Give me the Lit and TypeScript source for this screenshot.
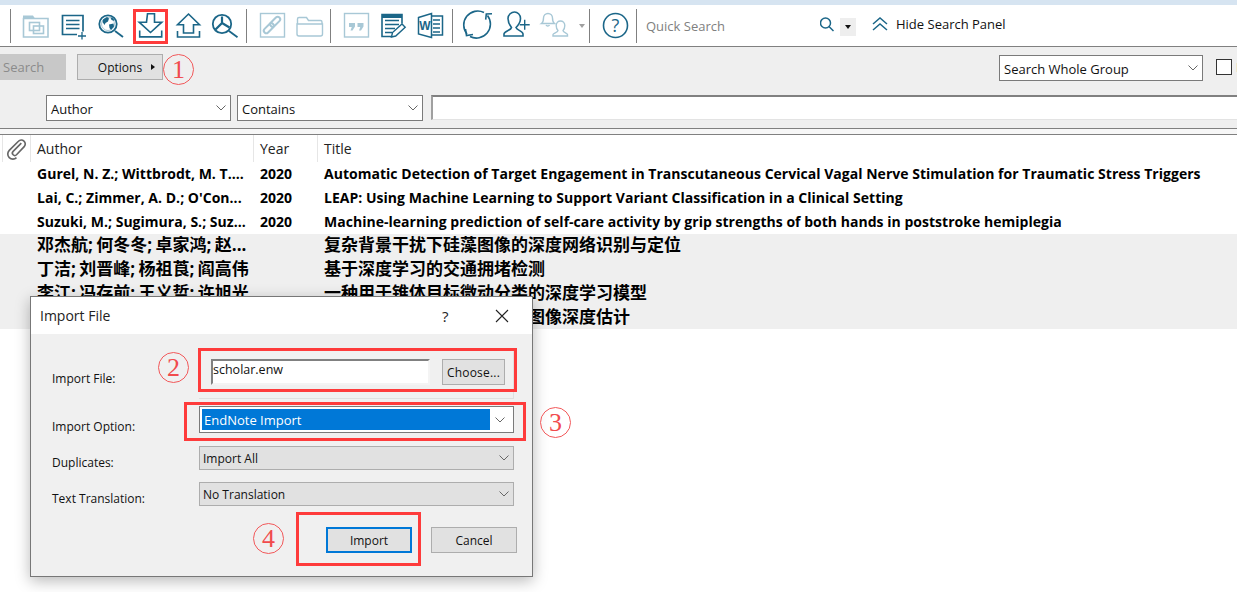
import { LitElement, html, css, svg } from "lit";
import { customElement } from "lit/decorators.js";

const D = "#1b6688";
const F = "#a8c8d6";

const group1 = [
  svg`<g fill="none" stroke="${F}" stroke-width="1.6"><path d="M23.500 18.500h24.500v18.500h-24.500z"/><rect x="29.500" y="22.500" width="10" height="8"/><rect x="33.500" y="26" width="10" height="7.500"/></g><path d="M23 15.500h10l2 3h-12z" fill="${F}"/>`,
  svg`<g fill="none" stroke="${D}" stroke-width="1.7"><path d="M77 34.500h-14.500v-19h20.500v16"/><path d="M66 20.500h13.500M66 24.500h13.500M66 28.500h13.500"/><path d="M82 32v7.500M78 36h8" stroke-width="1.300"/></g>`,
  svg`<circle cx="108" cy="24" r="8.700" fill="none" stroke="${D}" stroke-width="1.800"/><circle cx="108" cy="24" r="6.500" fill="none" stroke="${F}" stroke-width="1"/><path d="M103 19.500l4-2.500 2 1.500-1 3-2.500 1.500-1 2-2-3zM109 24.500l4.500-1 .5 3-3 3.500-1.500-2zM110.500 17l3 1.500 1 2.500-3-1z" fill="${D}"/><path d="M115 31l8 6" stroke="${D}" stroke-width="1.800" fill="none"/>`,
  svg`<g fill="none" stroke="${D}" stroke-width="1.600"><path d="M147.500 13.800h7v8.400h7.300l-11.300 10.300-11.300-10.300h7.300z"/><path d="M139.700 30.500v6.400h22v-6.400"/></g>`,
  svg`<g fill="none" stroke="${D}" stroke-width="1.600"><path d="M188.500 14l11 10.700h-6v8.300h-10v-8.300h-6z"/><path d="M177.500 31v6h22v-6"/></g>`,
  svg`<g fill="none" stroke="${D}" stroke-width="1.800"><circle cx="222" cy="24" r="9.200"/><path d="M229 31l8.500 6.300"/><path d="M222 16.500v6.500l-6.500 6.500M222 23l7.500 4.500" stroke-width="2.200"/></g>`,
];

const group2 = [
  svg`<rect x="260.500" y="13.500" width="24" height="23.500" fill="none" stroke="${F}" stroke-width="1.400"/><g transform="rotate(-45 272 25)" fill="none" stroke="${F}" stroke-width="2"><rect x="261.500" y="22.500" width="12" height="5" rx="2.500"/><rect x="270.500" y="22.500" width="12" height="5" rx="2.500"/></g>`,
  svg`<g fill="none" stroke="${F}" stroke-width="1.400"><path d="M297.500 24v-5a1.500 1.500 0 0 1 1.500-1.500h7.500l2 3h12a1.500 1.500 0 0 1 1.500 1.500v2"/><path d="M297 24h25.500v10a2 2 0 0 1-2 2h-21.500a2 2 0 0 1-2-2z"/></g>`,
];

const group3 = [
  svg`<rect x="344.500" y="13.500" width="24" height="23.500" fill="none" stroke="${F}" stroke-width="1.400"/><path d="M349 23h6v3.500l-2.500 4h-2l1.300-3.500h-2.800zM357.500 23h6v3.500l-2.500 4h-2l1.300-3.500h-2.800z" fill="${F}"/>`,
  svg`<g fill="none" stroke="${D}" stroke-width="1.600"><path d="M391 36.500h-9v-22h20v9"/><path d="M382 16.500h20" stroke-width="3"/><path d="M385 20.500h14M385 24.500h14M385 28.500h10M385 32.500h7"/><path d="M391.500 37l1-4.500 9.500-8.500 3.200 3.200-9.500 8.800z" stroke-width="1.400"/></g>`,
  svg`<g fill="none" stroke="${D}" stroke-width="1.500"><path d="M431 16h11.500v19h-11.500"/><path d="M433 20h7M433 24h7M433 28h7M433 32h7"/></g><path d="M418.500 17.500l13-4v24l-13-3.500z" fill="#fff" stroke="${D}" stroke-width="1.500"/><text x="425" y="30" text-anchor="middle" font-family="Liberation Sans" font-weight="700" font-size="12" fill="${D}">W</text>`,
];

const group4 = [
  svg`<g fill="none" stroke="${D}" stroke-width="1.600"><path d="M484 12.500A14 14 0 0 0 467 34"/><path d="M465.500 29l1 6.500 6.500-1"/><path d="M487.500 15.500A14 14 0 0 1 470 36.500"/><path d="M485.700 19.700l.6-5.700 5.700-.3"/></g>`,
  svg`<g fill="none" stroke="${D}" stroke-width="1.600"><path d="M504 36h19v-2c0-3-6-3.500-7-6.500 2-2 4.500-4.500 4.500-9 0-4-3-6.500-6-6.500-3 0-6.500 2.500-6.500 6.500 0 4.500 2 7 3.500 9-.5 3-7.500 3.500-7.500 6.500z"/><path d="M524.700 19.700v10M519.700 24.700h10" stroke-width="1.400"/></g>`,
  svg`<g fill="none" stroke="${F}" stroke-width="1.400"><path d="M541.500 23.500h13c-1.500-1-2-3-2-5.500 0-2.500-2-4.500-4.500-4.500s-4.500 2-4.500 4.500c0 2.500-.5 4.500-2 5.500zM546 25a2 2 0 0 0 3.500 0"/><path d="M553 36h14.500v-1.500c0-1.500-4.500-2-4.500-4 1.500-1.500 1.800-3.500 1.800-5 0-2.800-2-4.500-4.300-4.500s-4.300 1.700-4.300 4.500c0 1.500.3 3.500 1.800 5 0 2-5 2.500-5 4z"/></g>`,
];

const helpIcon = svg`<circle cx="615.500" cy="25.500" r="12" fill="none" stroke="${D}" stroke-width="1.600"/><text x="615.500" y="32" text-anchor="middle" font-family="Open Sans" font-size="18" fill="${D}">?</text>`;

const chev = html`<svg class="chev" viewBox="0 0 10 6"><path d="M.5.5L5 5 9.500.5" fill="none" stroke="#666" stroke-width="1"/></svg>`;

const rows = [
  ["Gurel, N. Z.; Wittbrodt, M. T....", "2020", "Automatic Detection of Target Engagement in Transcutaneous Cervical Vagal Nerve Stimulation for Traumatic Stress Triggers", false],
  ["Lai, C.; Zimmer, A. D.; O'Con...", "2020", "LEAP: Using Machine Learning to Support Variant Classification in a Clinical Setting", false],
  ["Suzuki, M.; Sugimura, S.; Suz...", "2020", "Machine-learning prediction of self-care activity by grip strengths of both hands in poststroke hemiplegia", false],
  ["邓杰航; 何冬冬; 卓家鸿; 赵...", "", "复杂背景干扰下硅藻图像的深度网络识别与定位", true],
  ["丁洁; 刘晋峰; 杨祖莨; 阎高伟", "", "基于深度学习的交通拥堵检测", true],
  ["李江; 冯存前; 王义哲; 许旭光", "", "一种用于锥体目标微动分类的深度学习模型", true],
  ["", "", "基于全卷积神经网络的单目图像深度估计", true],
] as const;

@customElement("app-root")
export class AppRoot extends LitElement {
  static styles = css`
    :host {
      display: block;
      position: relative;
      width: 1237px;
      height: 592px;
      overflow: hidden;
      background: #fff;
      font-family: "Open Sans", "Noto Sans CJK SC", sans-serif;
      font-size: 13px;
      color: #111;
    }
    .band { height: 5px; background: #d6e4f1; }
    .toolbar {
      display: flex;
      align-items: center;
      height: 41px;
      padding-left: 10px;
      border-bottom: 1px solid #808080;
      background: #fff;
    }
    .group {
      display: flex;
      align-items: center;
      height: 34px;
      border-left: 1px solid #808080;
      padding-left: 7px;
    }
    .group.first { padding-left: 6px; padding-right: 1px; }
    .group.help { padding-right: 1px; }
    .cell { display: block; width: 38px; height: 41px; flex: none; }
    .ddarrow { width: 15px; display: flex; justify-content: center; }
    .ddarrow i, .drop i {
      display: block;
      width: 0;
      border-left: 3.5px solid transparent;
      border-right: 3.5px solid transparent;
      border-top: 4px solid #a0a0a0;
    }
    .quick {
      border-left: 1px solid #808080;
      height: 34px;
      display: flex;
      align-items: center;
      padding-left: 9px;
      width: 174px;
      color: #808080;
      font-size: 13px;
      flex: none;
      box-sizing: content-box;
    }
    .mag { width: 20px; height: 20px; flex: none; margin-top: -3px; }
    .drop {
      width: 16px;
      height: 18px;
      background: #eee;
      display: flex;
      align-items: center;
      justify-content: center;
      flex: none;
      margin-top: 2px;
    }
    .drop i { border-top-color: #111; }
    .hide {
      display: flex;
      align-items: center;
      gap: 8px;
      margin-left: 16px;
      font-size: 13px;
      margin-top: -3px;
    }
    .hide svg { width: 16px; height: 14px; }

    .panel { height: 81px; background: #efefef; border-bottom: 1px solid #808080; }
    .panel-top {
      display: flex;
      align-items: flex-start;
      height: 48px;
      padding-top: 7px;
      box-sizing: border-box;
      white-space: nowrap;
    }
    .btn {
      box-sizing: border-box;
      display: flex;
      align-items: center;
      justify-content: center;
      background: #e1e1e1;
      border: 1px solid #adadad;
      font-size: 12px;
    }
    .search-btn {
      width: 66px;
      height: 26px;
      background: #c8c8c8;
      color: #8b8b8b;
      font-size: 13px;
      padding-left: 3px;
      box-sizing: border-box;
      display: flex;
      align-items: center;
      flex: none;
    }
    .options { width: 86px; height: 26px; margin-left: 11px; gap: 9px; padding-left: 13px; flex: none; }
    .options i {
      width: 0;
      border-top: 3px solid transparent;
      border-bottom: 3px solid transparent;
      border-left: 4px solid #111;
    }
    .sel {
      box-sizing: border-box;
      display: flex;
      align-items: center;
      justify-content: space-between;
      background: #fff;
      border: 1px solid #7a7a7a;
      padding: 0 4px 0 4px;
      font-size: 13px;
      flex: none;
    }
    .panel .sel span { padding-top: 2px; }
    .chev { width: 10px; height: 6px; flex: none; }
    .group-sel { width: 204px; height: 26px; margin-left: 836px; margin-top: 1px; }
    .check {
      width: 16px;
      height: 16px;
      box-sizing: border-box;
      border: 1px solid #333;
      background: #fff;
      margin: 5px 0 0 13px;
      flex: none;
    }
    .match { margin: 4px 0 0 4px; flex: none; }
    .panel-bottom { display: flex; align-items: flex-start; padding-left: 46px; }
    .sel-author { width: 185px; height: 26px; }
    .sel-contains { width: 186px; height: 26px; margin-left: 6px; }
    .term {
      flex: 1;
      height: 25px;
      box-sizing: border-box;
      margin-left: 8px;
      background: #fff;
      border-top: 2px solid #808080;
      border-left: 2px solid #a0a0a0;
      border-bottom: 1px solid #e3e3e3;
    }
    .strip { height: 5px; background: #f7f7f7; border-bottom: 1px solid #808080; }

    .line {
      display: grid;
      grid-template-columns: 30px 223px 64px 1fr;
      height: 24px;
      align-items: center;
    }
    .line > div { padding-left: 7px; white-space: nowrap; overflow: hidden; }
    .head { height: 27px; font-size: 14px; color: #222; }
    .head > div { height: 100%; display: flex; align-items: center; border-left: 1px solid #e6e6e6; box-sizing: border-box; padding-left: 6px; }
    .head > .clip-cell { margin-left: 2px; padding-left: 0; }
    .clip { display: block; width: 28px; height: 27px; }
    .row { font-weight: 700; font-size: 14px; color: #000; letter-spacing: 0.025px; }
    .row > div { padding-bottom: 2px; box-sizing: border-box; }
    .row.alt { background: #efefef; font-size: 17px; letter-spacing: 0; line-height: 22px; word-spacing: -1px; }
    .rows .row:last-child { height: 23px; }

    .dialog {
      position: absolute;
      left: 30px;
      top: 296px;
      width: 503px;
      height: 281px;
      box-sizing: border-box;
      border: 1px solid #777;
      background: #f0f0f0;
      box-shadow: 0 4px 14px rgba(0, 0, 0, 0.28);
      font-size: 12px;
      display: flex;
      flex-direction: column;
    }
    .title {
      height: 37px;
      flex: none;
      background: #fff;
      display: flex;
      align-items: center;
      padding-left: 9px;
      font-size: 14px;
      color: #222;
    }
    .title .name { flex: 1; }
    .title .q { font-size: 15px; width: 53px; }
    .title svg { width: 14px; height: 14px; margin-right: 23px; }
    .d-body { padding: 15px 18px 0 21px; display: flex; flex-direction: column; }
    .d-row { display: flex; align-items: flex-start; }
    .d-row label { width: 147px; flex: none; color: #111; line-height: 15px; }
    .file-box {
      width: 315px;
      height: 50px;
      box-sizing: border-box;
      border-right: 1px solid #dfdfdf;
      border-bottom: 1px solid #dfdfdf;
      padding: 10px 0 0 12px;
      display: flex;
      gap: 12px;
    }
    .file-input {
      width: 219px;
      height: 26px;
      box-sizing: border-box;
      background: #fff;
      border: 2px solid #f4f4f4;
      border-top-color: #808080;
      border-left-color: #808080;
      padding: 0;
      font-size: 12.500px;
    }
    .choose { width: 63px; height: 26px; letter-spacing: 0.2px; }
    .r1 label { padding-top: 22px; }
    .r2 { margin-top: 7px; height: 27px; }
    .r2 label { padding-top: 12.500px; }
    .r3 { margin-top: 13px; height: 24px; }
    .r3 label, .r4 label { padding-top: 9px; }
    .r4 { margin-top: 12px; height: 24px; }
    .opt { width: 315px; height: 27px; padding: 2px 8px 2px 2px; border-color: #7a7a7a; }
    .opt .hl {
      width: 288px;
      height: 100%;
      background: #0078d7;
      color: #fff;
      display: flex;
      align-items: center;
      padding-left: 2px;
      box-sizing: border-box;
      font-size: 13px;
    }
    .dis { width: 315px; height: 24px; background: #e1e1e1; border-color: #adadad; font-size: 12px; padding-left: 3px; }
    .actions { display: flex; justify-content: flex-end; gap: 19px; margin-top: 21px; margin-right: -3px; }
    .actions .btn { width: 86px; height: 26px; }
    .primary { border: 2px solid #0078d7 !important; }

    .mark { position: absolute; border: 3px solid #fe3b3b; box-sizing: border-box; pointer-events: none; }
    .m1 { left: 133px; top: 9px; width: 35px; height: 35px; }
    .m2 { left: 198px; top: 348px; width: 319px; height: 44px; }
    .m3 { left: 184px; top: 402px; width: 342px; height: 39px; }
    .m4 { left: 296px; top: 512px; width: 125px; height: 54px; }
    .num {
      position: absolute;
      box-sizing: border-box;
      width: 31px;
      height: 31px;
      border: 1px solid #f2585a;
      border-radius: 50%;
      color: #f14b4d;
      font-family: "Liberation Serif", serif;
      font-size: 26px;
      line-height: 29px;
      text-align: center;
    }
    .n1 { left: 163px; top: 54px; }
    .n2 { left: 158px; top: 352px; }
    .n3 { left: 540px; top: 407px; }
    .n4 { left: 253px; top: 523px; }
  `;

  private cells(items: unknown[], left: number) {
    return items.map(
      (g, i) => html`<svg class="cell" viewBox="${left + i * 38} 5 38 41">${g}</svg>`
    );
  }

  render() {
    return html`
      <div class="band"></div>
      <div class="toolbar">
        <div class="group first">${this.cells(group1, 17)}</div>
        <div class="group">${this.cells(group2, 254)}</div>
        <div class="group">${this.cells(group3, 338)}</div>
        <div class="group">
          ${this.cells(group4, 460)}
          <span class="ddarrow"><i></i></span>
        </div>
        <div class="group help">${this.cells([helpIcon], 597)}</div>
        <div class="quick">Quick Search</div>
        <svg class="mag" viewBox="0 0 20 20"><circle cx="5.500" cy="9" r="5" fill="none" stroke="${D}" stroke-width="1.500"/><path d="M9 12.500l4.500 4.500" stroke="${D}" stroke-width="1.500"/></svg>
        <span class="drop"><i></i></span>
        <div class="hide">
          <svg viewBox="0 0 16 14"><path d="M1 7l7-6 7 6M1 13l7-6 7 6" fill="none" stroke="${D}" stroke-width="1.500"/></svg>
          <span>Hide Search Panel</span>
        </div>
      </div>
      <div class="panel">
        <div class="panel-top">
          <div class="search-btn">Search</div>
          <div class="btn options"><span>Options</span><i></i></div>
          <div class="sel group-sel"><span>Search Whole Group</span>${chev}</div>
          <div class="check"></div>
          <span class="match">Match Case</span>
        </div>
        <div class="panel-bottom">
          <div class="sel sel-author"><span>Author</span>${chev}</div>
          <div class="sel sel-contains"><span>Contains</span>${chev}</div>
          <div class="term"></div>
        </div>
      </div>
      <div class="strip"></div>
      <div class="line head">
        <div class="clip-cell">
          <svg class="clip" viewBox="2 135 28 27"><path d="M21 146l-8.500 8.500a2.400 2.400 0 0 0 3.500 3.500l8-8.500a4 4 0 0 0-6-5.500l-9.500 9.500a5.300 5.300 0 0 0 7.500 7.500" transform="translate(0 -3)" fill="none" stroke="#666" stroke-width="1.700"/></svg>
        </div>
        <div>Author</div>
        <div>Year</div>
        <div>Title</div>
      </div>
      <div class="rows">
        ${rows.map(
          ([a, y, t, alt]) => html`<div class="line row ${alt ? "alt" : ""}">
            <div></div><div>${a}</div><div>${y}</div><div>${t}</div>
          </div>`
        )}
      </div>

      <div class="dialog">
        <div class="title">
          <span class="name">Import File</span>
          <span class="q">?</span>
          <svg viewBox="0 0 14 14"><path d="M1 1l12 12M13 1L1 13" stroke="#222" stroke-width="1.100" fill="none"/></svg>
        </div>
        <div class="d-body">
          <div class="d-row r1">
            <label>Import File:</label>
            <div class="file-box">
              <div class="file-input">scholar.enw</div>
              <div class="btn choose">Choose...</div>
            </div>
          </div>
          <div class="d-row r2">
            <label>Import Option:</label>
            <div class="sel opt"><span class="hl">EndNote Import</span>${chev}</div>
          </div>
          <div class="d-row r3">
            <label>Duplicates:</label>
            <div class="sel dis"><span>Import All</span>${chev}</div>
          </div>
          <div class="d-row r4">
            <label>Text Translation:</label>
            <div class="sel dis"><span>No Translation</span>${chev}</div>
          </div>
          <div class="actions">
            <div class="btn primary">Import</div>
            <div class="btn">Cancel</div>
          </div>
        </div>
      </div>

      <div class="mark m1"></div>
      <div class="mark m2"></div>
      <div class="mark m3"></div>
      <div class="mark m4"></div>
      <div class="num n1">1</div>
      <div class="num n2">2</div>
      <div class="num n3">3</div>
      <div class="num n4">4</div>
    `;
  }
}
